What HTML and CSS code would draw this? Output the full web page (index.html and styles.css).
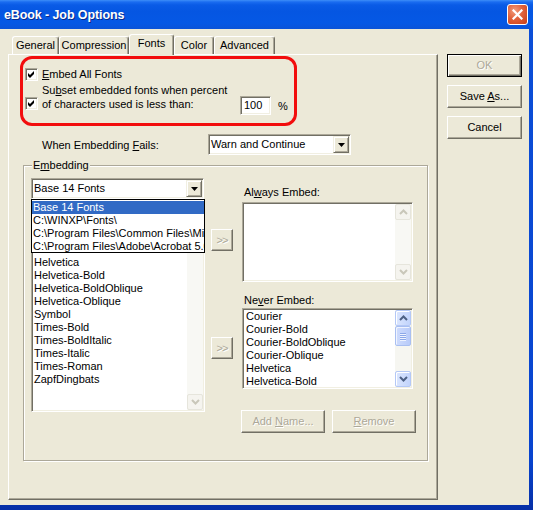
FILE: index.html
```html
<!DOCTYPE html>
<html>
<head>
<meta charset="utf-8">
<link rel="stylesheet" href="styles.css">
</head>
<body>
<div class="window">
  <div class="titlebar">
    <span class="title">eBook - Job Options</span>
    <span class="close"><svg width="11" height="11" viewBox="0 0 11 11"><path d="M1.5 1.5 L9.5 9.5 M9.5 1.5 L1.5 9.5" stroke="#fff" stroke-width="2.2" stroke-linecap="square"/></svg></span>
  </div>
  <div class="client">
    <div class="tabctl">
      <div class="tabs">
        <div class="tab t-general">General</div>
        <div class="tab t-comp">Compression</div>
        <div class="tab t-fonts sel">Fonts</div>
        <div class="tab t-color">Color</div>
        <div class="tab t-adv">Advanced</div>
      </div>
      <div class="panel">
        <div class="redbox">
          <div class="row1">
            <span class="chk sunken"><svg width="7" height="7" viewBox="0 0 7 7"><path d="M0 2 L2 4 L6 0 L6 3 L2 7 L0 5 Z" fill="#000"/></svg></span>
            <span class="lbl"><u>E</u>mbed All Fonts</span>
          </div>
          <div class="row2">
            <span class="chk chk2 sunken"><svg width="7" height="7" viewBox="0 0 7 7"><path d="M0 2 L2 4 L6 0 L6 3 L2 7 L0 5 Z" fill="#000"/></svg></span>
            <div class="subtext">Su<u>b</u>set embedded fonts when percent<br>of characters used is less than:</div>
            <div class="edit sunken">100</div>
            <span class="pct">%</span>
          </div>
        </div>
        <div class="failrow">
          <span class="faillbl">When Embedding <u>F</u>ails:</span>
          <div class="combo failcombo sunken"><span class="combotext">Warn and Continue</span><span class="dd"><svg width="7" height="4" viewBox="0 0 7 4"><polygon points="0,0 7,0 3.5,4" fill="#000"/></svg></span></div>
        </div>
        <div class="group">
          <div class="grouplbl">E<u>m</u>bedding</div>
          <div class="groupbody">
            <div class="leftcol">
              <div class="combo srccombo sunken"><span class="combotext">Base 14 Fonts</span><span class="dd"><svg width="7" height="4" viewBox="0 0 7 4"><polygon points="0,0 7,0 3.5,4" fill="#000"/></svg></span></div>
              <div class="listbox leftlist sunken">
                <div class="items">
                  <div class="under">Courier</div>
                  <div class="under">Courier-Bold</div>
                  <div class="under">Courier-BoldOblique</div>
                  <div class="under">Courier-Oblique</div>
                  <div>Helvetica</div>
                  <div>Helvetica-Bold</div>
                  <div>Helvetica-BoldOblique</div>
                  <div>Helvetica-Oblique</div>
                  <div>Symbol</div>
                  <div>Times-Bold</div>
                  <div>Times-BoldItalic</div>
                  <div>Times-Italic</div>
                  <div>Times-Roman</div>
                  <div>ZapfDingbats</div>
                </div>
                <div class="vscroll dis">
                  <div class="sbtn"><svg width="9" height="6" viewBox="0 0 9 6"><polyline points="1,5 4.5,1.5 8,5" fill="none" stroke="#c9c7ba" stroke-width="2"/></svg></div>
                  <div class="track"></div>
                  <div class="sbtn"><svg width="9" height="6" viewBox="0 0 9 6"><polyline points="1,1 4.5,4.5 8,1" fill="none" stroke="#c9c7ba" stroke-width="2"/></svg></div>
                </div>
              </div>
              <div class="droplist">
                <div class="hl">Base 14 Fonts</div>
                <div>C:\WINXP\Fonts\</div>
                <div>C:\Program Files\Common Files\Mic</div>
                <div>C:\Program Files\Adobe\Acrobat 5.0</div>
              </div>
            </div>
            <div class="midcol">
              <div class="btn dis arrowbtn"><span>&gt;&gt;</span></div>
              <div class="btn dis arrowbtn second"><span>&gt;&gt;</span></div>
            </div>
            <div class="rightcol">
              <div class="collbl">Al<u>w</u>ays Embed:</div>
              <div class="listbox always sunken">
                <div class="items"></div>
                <div class="vscroll dis">
                  <div class="sbtn"><svg width="9" height="6" viewBox="0 0 9 6"><polyline points="1,5 4.5,1.5 8,5" fill="none" stroke="#c9c7ba" stroke-width="2"/></svg></div>
                  <div class="track"></div>
                  <div class="sbtn"><svg width="9" height="6" viewBox="0 0 9 6"><polyline points="1,1 4.5,4.5 8,1" fill="none" stroke="#c9c7ba" stroke-width="2"/></svg></div>
                </div>
              </div>
              <div class="collbl never">Ne<u>v</u>er Embed:</div>
              <div class="listbox neverlist sunken">
                <div class="items">
                  <div>Courier</div>
                  <div>Courier-Bold</div>
                  <div>Courier-BoldOblique</div>
                  <div>Courier-Oblique</div>
                  <div>Helvetica</div>
                  <div>Helvetica-Bold</div>
                </div>
                <div class="vscroll luna">
                  <div class="sbtn"><svg width="9" height="6" viewBox="0 0 9 6"><polyline points="1,5 4.5,1.5 8,5" fill="none" stroke="#4d6185" stroke-width="2"/></svg></div>
                  <div class="track"><div class="thumb"><span></span><span></span><span></span><span></span></div></div>
                  <div class="sbtn"><svg width="9" height="6" viewBox="0 0 9 6"><polyline points="1,1 4.5,4.5 8,1" fill="none" stroke="#4d6185" stroke-width="2"/></svg></div>
                </div>
              </div>
              <div class="btnrow">
                <div class="btn dis wide"><span>Add <u>N</u>ame...</span></div>
                <div class="btn dis wide"><span><u>R</u>emove</span></div>
              </div>
            </div>
          </div>
        </div>
      </div>
    </div>
    <div class="sidebtns">
      <div class="btn dis default"><span>OK</span></div>
      <div class="btn"><span>Save <u>A</u>s...</span></div>
      <div class="btn"><span>Cancel</span></div>
    </div>
  </div>
</div>
</body>
</html>
```

FILE: styles.css
```css
html, body {
  margin: 0;
  padding: 0;
}
body {
  width: 533px;
  height: 510px;
  overflow: hidden;
  font-family: "Liberation Sans", Arial, sans-serif;
  font-size: 11px;
  color: #000;
}
u { text-decoration: underline; text-underline-offset: 1px; }

.btn {
  box-sizing: border-box;
  width: 75px;
  height: 23px;
  background: #ece9d8;
  border: 1px solid;
  border-color: #fff #716f64 #716f64 #fff;
  box-shadow: inset -1px -1px 0 #aca899;
  display: flex;
  align-items: center;
  justify-content: center;
  line-height: 13px;
  white-space: nowrap;
}
.btn.dis {
  color: #aca899;
  text-shadow: 1px 1px 0 #fff;
}
.btn.default {
  border: 1px solid #000;
  box-shadow: inset 1px 1px 0 #fff, inset -1px -1px 0 #716f64, inset -2px -2px 0 #aca899;
}

.window {
  width: 533px;
  height: 510px;
  background: linear-gradient(to bottom, #0c4fd8 0%, #0844cf 90%, #062fa6 100%);
  display: flex;
  flex-direction: column;
}
.titlebar {
  height: 29px;
  flex: none;
  display: flex;
  align-items: center;
  padding-left: 4px;
  background: linear-gradient(to bottom, #3d8ef8 0px, #1a6cf0 2px, #0a5be6 5px, #0556e2 40%, #0558e5 80%, #0a53d8 100%);
}
.title {
  color: #fff;
  font-weight: bold;
  font-size: 12.5px;
  text-shadow: 1px 1px 0 #0a2a8a;
  letter-spacing: -0.1px;
}
.close {
  margin-left: auto;
  margin-right: 5px;
  width: 21px;
  height: 21px;
  box-sizing: border-box;
  border: 1px solid #fff;
  border-radius: 3px;
  background: radial-gradient(circle at 35% 30%, #f19c7c 0%, #e1623c 45%, #c73d16 100%);
  display: flex;
  align-items: center;
  justify-content: center;
}

.client {
  width: 529px;
  height: 476px;
  background: #ece9d8;
  display: flex;
  align-items: flex-start;
}

.tabctl {
  margin-left: 8px;
  margin-top: 5px;
  width: 430px;
}
.tabs {
  display: flex;
  align-items: flex-end;
  height: 20px;
  padding-left: 4px;
}
.tab {
  box-sizing: border-box;
  height: 18px;
  border: 1px solid #fff;
  border-bottom: none;
  border-right-color: #716f64;
  box-shadow: inset -1px 0 0 #aca899;
  border-radius: 3px 3px 0 0;
  text-align: center;
  line-height: 17px;
  background: #ece9d8;
}
.t-general { width: 47px; }
.t-comp { width: 70px; }
.t-fonts { width: 45px; }
.t-color { width: 40px; }
.t-adv { width: 61px; }
.tab.sel {
  height: 21px;
  margin-bottom: -1px;
  position: relative;
  z-index: 1;
  line-height: 17px;
}

.panel {
  box-sizing: border-box;
  height: 446px;
  border: 1px solid;
  border-color: #fff #716f64 #716f64 #fff;
  box-shadow: inset -1px -1px 0 #aca899;
  overflow: hidden;
}

.sunken {
  box-sizing: border-box;
  border: 1px solid;
  border-color: #aca899 #fff #fff #aca899;
  box-shadow: inset 1px 1px 0 #716f64, inset -1px -1px 0 #f1efe2;
  padding: 1px;
  background: #fff;
}

.redbox {
  box-sizing: border-box;
  margin: 1px 0 0 11px;
  width: 277px;
  height: 70px;
  border: 3px solid #f20d0d;
  border-radius: 12px;
  padding-left: 2px;
}
.row1 {
  display: flex;
  align-items: center;
  margin-top: 9px;
  height: 13px;
}
.chk {
  width: 13px;
  height: 13px;
  flex: none;
  display: flex;
  align-items: center;
  justify-content: center;
}
.lbl { margin-left: 4px; line-height: 13px; }
.row2 {
  display: flex;
  align-items: flex-start;
  margin-top: 2px;
}
.chk2 { margin-top: 14px; }
.subtext {
  margin-left: 4px;
  width: 198px;
  line-height: 14px;
}
.edit {
  margin-top: 13px;
  width: 31px;
  height: 19px;
  padding-left: 3px;
  line-height: 15px;
}
.pct {
  margin-left: 7px;
  margin-top: 17px;
  line-height: 13px;
}

.failrow {
  display: flex;
  align-items: center;
  margin-top: 8px;
  padding-left: 33px;
  height: 21px;
}
.faillbl { width: 166px; }
.combo {
  height: 21px;
  display: flex;
  align-items: center;
}
.failcombo { width: 143px; }
.combotext {
  flex: 1;
  padding-left: 1px;
  white-space: nowrap;
  overflow: hidden;
  line-height: 13px;
}
.dd {
  width: 16px;
  height: 17px;
  box-sizing: border-box;
  flex: none;
  background: #ece9d8;
  border: 1px solid;
  border-color: #f1efe2 #716f64 #716f64 #f1efe2;
  box-shadow: inset 1px 1px 0 #fff, inset -1px -1px 0 #aca899;
  display: flex;
  align-items: center;
  justify-content: center;
}

.group {
  box-sizing: border-box;
  margin: 10px 0 0 14px;
  width: 405px;
  height: 296px;
  border: 1px solid #aca899;
  box-shadow: inset 1px 1px 0 #fff, 1px 1px 0 #fff;
}
.grouplbl {
  width: max-content;
  margin: -7px 0 0 8px;
  padding: 0 1px;
  line-height: 13px;
  background: #ece9d8;
}
.groupbody {
  display: flex;
  align-items: flex-start;
  margin-top: 6px;
  padding-left: 7px;
}
.leftcol {
  width: 174px;
  position: relative;
}
.srccombo { width: 173px; }
.listbox {
  display: flex;
  padding: 1px;
}
.items {
  flex: 1;
  overflow: hidden;
  line-height: 13px;
  white-space: nowrap;
}
.leftlist {
  margin-top: 3px;
  height: 210px;
}
.leftlist .items { padding-left: 1px; }
.leftlist .under { visibility: hidden; }
.droplist {
  position: absolute;
  left: 0;
  top: 21px;
  width: 174px;
  height: 54px;
  box-sizing: border-box;
  border: 1px solid #000;
  background: #fff;
  line-height: 13px;
  white-space: nowrap;
  overflow: hidden;
  padding-top: 1px;
}
.droplist div { padding-left: 1px; }
.droplist .hl {
  background: #316ac5;
  color: #fff;
}

.vscroll {
  width: 16px;
  flex: none;
  display: flex;
  flex-direction: column;
  background: #f8f8f4;
}
.vscroll .track { flex: 1; }
.sbtn {
  height: 16px;
  box-sizing: border-box;
  flex: none;
  display: flex;
  align-items: center;
  justify-content: center;
  border-radius: 2px;
}
.vscroll.dis .sbtn {
  border: 1px solid #e6e5dc;
  background: #f5f4ef;
}
.vscroll.luna { background: #f6f6f1; }
.vscroll.luna .sbtn {
  border: 1px solid #b4c8f6;
  background: linear-gradient(to right, #dbe6fe, #c2d4fc);
  box-shadow: inset 1px 1px 0 #fff;
}
.vscroll.luna .thumb {
  height: 20px;
  box-sizing: border-box;
  border: 1px solid #a9bff1;
  border-radius: 2px;
  background: linear-gradient(to right, #cfdcfd, #b8cbf9);
  box-shadow: inset 1px 1px 0 #f0f4ff;
  display: flex;
  flex-direction: column;
  align-items: center;
  justify-content: center;
  gap: 1px;
}
.thumb span {
  display: block;
  width: 6px;
  height: 1px;
  background: #8ca8e8;
  box-shadow: 0 1px 0 #eef3ff;
}

.midcol {
  margin-left: 6px;
  width: 22px;
}
.btn.arrowbtn {
  width: 22px;
  height: 22px;
  margin-top: 51px;
  letter-spacing: -1px;
}
.btn.arrowbtn.second { margin-top: 86px; }

.rightcol {
  margin-left: 8px;
  width: 175px;
}
.collbl {
  padding-left: 3px;
  margin-top: 8px;
  line-height: 13px;
}
.collbl.never { margin-top: 12px; }
.always {
  margin: 3px 0 0 1px;
  width: 171px;
  height: 80px;
}
.neverlist {
  margin: 1px 0 0 1px;
  width: 171px;
  height: 81px;
}
.neverlist .items { padding-left: 2px; }
.btnrow {
  display: flex;
  gap: 7px;
  margin-top: 21px;
}
.btn.wide { width: 84px; }

.sidebtns {
  margin-left: 9px;
  margin-top: 25px;
  display: flex;
  flex-direction: column;
  gap: 8px;
}
```
